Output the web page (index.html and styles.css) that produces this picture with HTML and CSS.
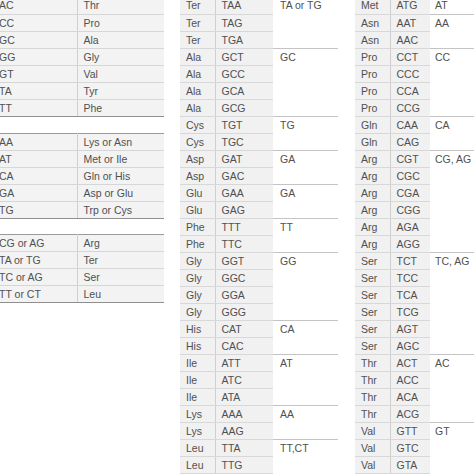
FILE: index.html
```html
<!DOCTYPE html>
<html>
<head>
<meta charset="utf-8">
<link rel="stylesheet" href="styles.css">
</head>
<body>
<div class="page">
  <div class="left">
    <table class="pairs g1">
      <tr><td class="c1">AC</td><td class="c2">Thr</td></tr>
      <tr><td class="c1">CC</td><td class="c2">Pro</td></tr>
      <tr><td class="c1">GC</td><td class="c2">Ala</td></tr>
      <tr><td class="c1">GG</td><td class="c2">Gly</td></tr>
      <tr><td class="c1">GT</td><td class="c2">Val</td></tr>
      <tr><td class="c1">TA</td><td class="c2">Tyr</td></tr>
      <tr><td class="c1">TT</td><td class="c2">Phe</td></tr>
    </table>
    <table class="pairs g2">
      <tr><td class="c1">AA</td><td class="c2">Lys or Asn</td></tr>
      <tr><td class="c1">AT</td><td class="c2">Met or Ile</td></tr>
      <tr><td class="c1">CA</td><td class="c2">Gln or His</td></tr>
      <tr><td class="c1">GA</td><td class="c2">Asp or Glu</td></tr>
      <tr><td class="c1">TG</td><td class="c2">Trp or Cys</td></tr>
    </table>
    <table class="pairs g3">
      <tr><td class="c1">CG or AG</td><td class="c2">Arg</td></tr>
      <tr><td class="c1">TA or TG</td><td class="c2">Ter</td></tr>
      <tr><td class="c1">TC or AG</td><td class="c2">Ser</td></tr>
      <tr><td class="c1">TT or CT</td><td class="c2">Leu</td></tr>
    </table>
  </div>

  <table class="codons mid">
    <tr><td class="aa">Ter</td><td class="cod">TAA</td><td class="grp" rowspan="3">TA or TG</td></tr>
    <tr><td class="aa">Ter</td><td class="cod">TAG</td></tr>
    <tr><td class="aa">Ter</td><td class="cod">TGA</td></tr>
    <tr><td class="aa">Ala</td><td class="cod">GCT</td><td class="grp" rowspan="4">GC</td></tr>
    <tr><td class="aa">Ala</td><td class="cod">GCC</td></tr>
    <tr><td class="aa">Ala</td><td class="cod">GCA</td></tr>
    <tr><td class="aa">Ala</td><td class="cod">GCG</td></tr>
    <tr><td class="aa">Cys</td><td class="cod">TGT</td><td class="grp" rowspan="2">TG</td></tr>
    <tr><td class="aa">Cys</td><td class="cod">TGC</td></tr>
    <tr><td class="aa">Asp</td><td class="cod">GAT</td><td class="grp" rowspan="2">GA</td></tr>
    <tr><td class="aa">Asp</td><td class="cod">GAC</td></tr>
    <tr><td class="aa">Glu</td><td class="cod">GAA</td><td class="grp" rowspan="2">GA</td></tr>
    <tr><td class="aa">Glu</td><td class="cod">GAG</td></tr>
    <tr><td class="aa">Phe</td><td class="cod">TTT</td><td class="grp" rowspan="2">TT</td></tr>
    <tr><td class="aa">Phe</td><td class="cod">TTC</td></tr>
    <tr><td class="aa">Gly</td><td class="cod">GGT</td><td class="grp" rowspan="4">GG</td></tr>
    <tr><td class="aa">Gly</td><td class="cod">GGC</td></tr>
    <tr><td class="aa">Gly</td><td class="cod">GGA</td></tr>
    <tr><td class="aa">Gly</td><td class="cod">GGG</td></tr>
    <tr><td class="aa">His</td><td class="cod">CAT</td><td class="grp" rowspan="2">CA</td></tr>
    <tr><td class="aa">His</td><td class="cod">CAC</td></tr>
    <tr><td class="aa">Ile</td><td class="cod">ATT</td><td class="grp" rowspan="3">AT</td></tr>
    <tr><td class="aa">Ile</td><td class="cod">ATC</td></tr>
    <tr><td class="aa">Ile</td><td class="cod">ATA</td></tr>
    <tr><td class="aa">Lys</td><td class="cod">AAA</td><td class="grp" rowspan="2">AA</td></tr>
    <tr><td class="aa">Lys</td><td class="cod">AAG</td></tr>
    <tr><td class="aa">Leu</td><td class="cod">TTA</td><td class="grp" rowspan="3">TT,CT</td></tr>
    <tr><td class="aa">Leu</td><td class="cod">TTG</td></tr>
    <tr><td class="aa"></td><td class="cod"></td></tr>
  </table>

  <table class="codons right">
    <tr><td class="aa">Met</td><td class="cod">ATG</td><td class="grp first" rowspan="1">AT</td></tr>
    <tr><td class="aa">Asn</td><td class="cod">AAT</td><td class="grp" rowspan="2">AA</td></tr>
    <tr><td class="aa">Asn</td><td class="cod">AAC</td></tr>
    <tr><td class="aa">Pro</td><td class="cod">CCT</td><td class="grp" rowspan="4">CC</td></tr>
    <tr><td class="aa">Pro</td><td class="cod">CCC</td></tr>
    <tr><td class="aa">Pro</td><td class="cod">CCA</td></tr>
    <tr><td class="aa">Pro</td><td class="cod">CCG</td></tr>
    <tr><td class="aa">Gln</td><td class="cod">CAA</td><td class="grp" rowspan="2">CA</td></tr>
    <tr><td class="aa">Gln</td><td class="cod">CAG</td></tr>
    <tr><td class="aa">Arg</td><td class="cod">CGT</td><td class="grp" rowspan="6">CG, AG</td></tr>
    <tr><td class="aa">Arg</td><td class="cod">CGC</td></tr>
    <tr><td class="aa">Arg</td><td class="cod">CGA</td></tr>
    <tr><td class="aa">Arg</td><td class="cod">CGG</td></tr>
    <tr><td class="aa">Arg</td><td class="cod">AGA</td></tr>
    <tr><td class="aa">Arg</td><td class="cod">AGG</td></tr>
    <tr><td class="aa">Ser</td><td class="cod">TCT</td><td class="grp" rowspan="6">TC, AG</td></tr>
    <tr><td class="aa">Ser</td><td class="cod">TCC</td></tr>
    <tr><td class="aa">Ser</td><td class="cod">TCA</td></tr>
    <tr><td class="aa">Ser</td><td class="cod">TCG</td></tr>
    <tr><td class="aa">Ser</td><td class="cod">AGT</td></tr>
    <tr><td class="aa">Ser</td><td class="cod">AGC</td></tr>
    <tr><td class="aa">Thr</td><td class="cod">ACT</td><td class="grp" rowspan="4">AC</td></tr>
    <tr><td class="aa">Thr</td><td class="cod">ACC</td></tr>
    <tr><td class="aa">Thr</td><td class="cod">ACA</td></tr>
    <tr><td class="aa">Thr</td><td class="cod">ACG</td></tr>
    <tr><td class="aa">Val</td><td class="cod">GTT</td><td class="grp" rowspan="4">GT</td></tr>
    <tr><td class="aa">Val</td><td class="cod">GTC</td></tr>
    <tr><td class="aa">Val</td><td class="cod">GTA</td></tr>
    <tr><td class="aa"></td><td class="cod"></td></tr>
  </table>
</div>
</body>
</html>
```

FILE: styles.css
```css
html, body {
  margin: 0;
  padding: 0;
  background: #ffffff;
  overflow: hidden;
}

body {
  width: 474px;
  height: 474px;
  font-family: "Liberation Sans", Arial, sans-serif;
  font-size: 10.5px;
  color: #505050;
}

.page {
  display: flex;
  align-items: flex-start;
  margin-top: -3px;
}

table {
  border-collapse: collapse;
  border-spacing: 0;
}

td {
  padding: 0;
  height: 17px;
  box-sizing: border-box;
  white-space: nowrap;
  vertical-align: middle;
  line-height: 16px;
}

/* left column: dinucleotide tables */
.left {
  width: 164px;
  flex: none;
  display: flex;
  flex-direction: column;
}

.pairs {
  width: 164px;
  table-layout: fixed;
}

.pairs td {
  background: #f3f3f3;
  border-bottom: 1px solid #d6d6d6;
}

.pairs tr:last-child td {
  border-bottom: 1px solid #8f8f8f;
}

.pairs .c1 {
  width: 77px;
  padding-left: 0;
  text-indent: -1px;
  border-right: 1px solid #cfcfcf;
}

.pairs .c2 {
  padding-left: 6px;
}

.g2, .g3 {
  border-top: 1px solid #9a9a9a;
}

.g2 {
  margin-top: 16px;
}

.g3 {
  margin-top: 15px;
}

/* codon tables */
.codons {
  table-layout: fixed;
  flex: none;
}

.codons .aa,
.codons .cod {
  background: #f1f1f1;
  border-bottom: 1px solid #d8d8d8;
}

.codons .aa {
  padding-left: 6px;
  border-right: 1px solid #cfcfcf;
}

.codons .cod {
  padding-left: 6px;
}

.codons .grp {
  vertical-align: top;
  padding-left: 7px;
  border-top: 1px solid #c4c4c4;
  background: #ffffff;
}

.codons .grp.first {
  border-top: none;
}

.mid {
  margin-left: 16px;
  width: 158px;
}

.mid .aa { width: 35px; }
.mid .cod { width: 58px; }
.mid .grp { width: 65px; }

.mid tr:first-child .grp {
  border-top: none;
}

.right {
  margin-left: 17px;
  width: 130px;
}

.right .aa { width: 35px; }
.right .cod { width: 40px; }
.right .grp { width: 55px; padding-left: 5px; }
```
